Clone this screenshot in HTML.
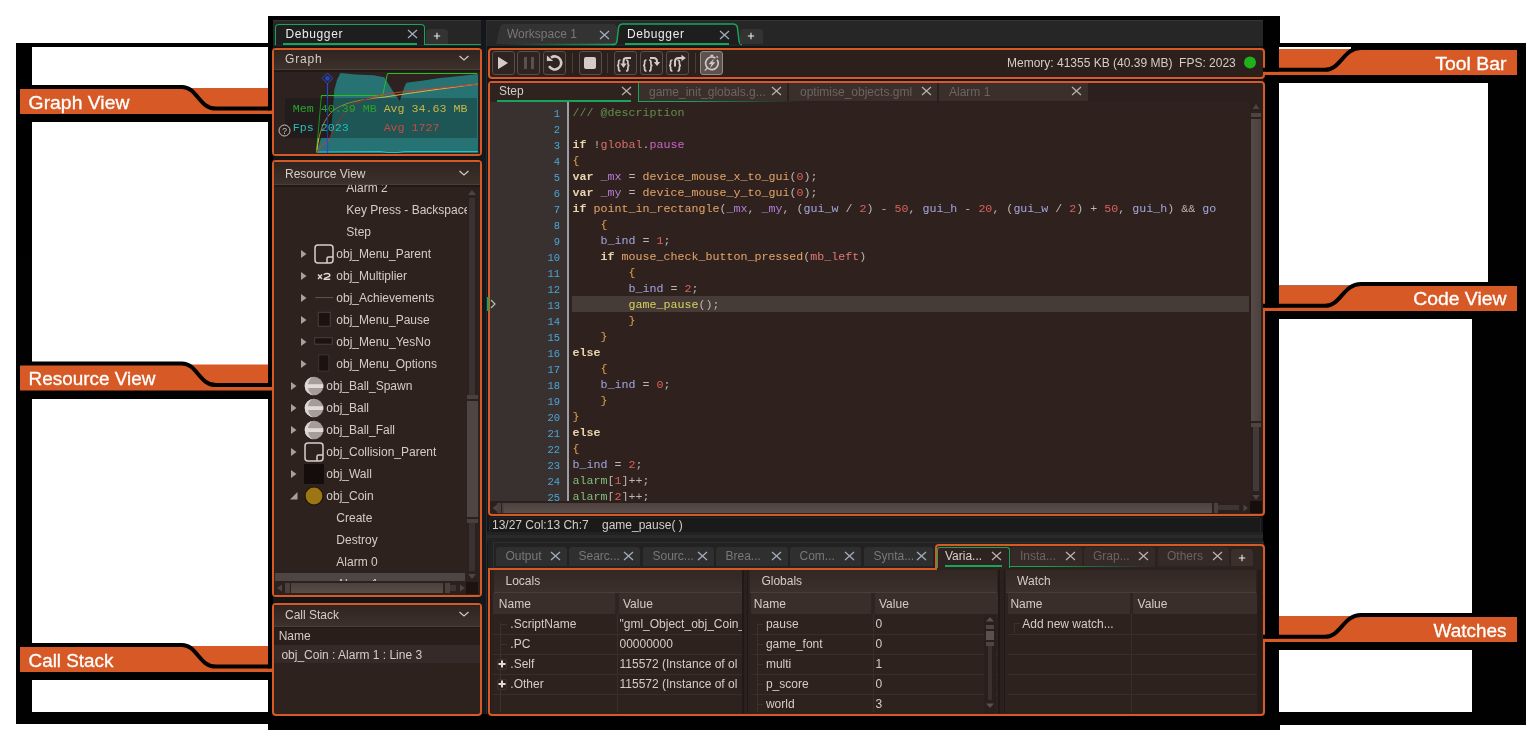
<!DOCTYPE html>
<html><head><meta charset="utf-8"><style>
*{margin:0;padding:0;box-sizing:border-box}
html,body{width:1537px;height:736px;overflow:hidden;background:#fff}
body{position:relative;font-family:"Liberation Sans",sans-serif;font-size:12px;color:#d6ccc6}
div{position:absolute}
.t{white-space:pre;line-height:14px}
.m{font-family:"Liberation Mono",monospace;font-size:11.667px;white-space:pre;line-height:16px}
svg{position:absolute;left:0;top:0}
</style></head><body>
<div id="root" style="left:0;top:0;width:1537px;height:736px;overflow:hidden;will-change:transform;opacity:0.999">
<div style="left:268px;top:16px;width:1012px;height:714px;background:#000"></div>
<div style="left:273px;top:20px;width:990px;height:694px;background:#141517"></div>
<div style="left:273px;top:20px;width:208px;height:26px;background:#262626"></div>
<div style="left:487px;top:20px;width:776px;height:26px;background:#262626"></div>
<div style="left:481px;top:20px;width:6px;height:694px;background:#15171a"></div>
<div style="left:486px;top:20px;width:1px;height:694px;background:#2a2c2f"></div>
<div style="left:273px;top:20px;width:208px;height:1px;background:#363636"></div>
<div style="left:487px;top:20px;width:776px;height:1px;background:#363636"></div>
<div style="left:275px;top:24px;width:150px;height:21px;background:#1e1e1e;border:1.5px solid #17a55a;border-bottom:none;border-radius:4px 4px 0 0"></div>
<div style="left:425px;top:43.5px;width:56px;height:1.5px;background:#17a55a"></div>
<div style="left:283px;top:42.5px;width:134px;height:2.5px;background:#17a55a"></div>
<div class="t" style="left:285.5px;top:27px;color:#ececec;letter-spacing:0.6px">Debugger</div>
<svg style="left:406.8px;top:29.200000000000003px" width="11" height="10"><path d="M1,1 L10,9 M10,1 L1,9" stroke="#a4acbc" stroke-width="1.3" fill="none"/></svg>
<div style="left:426px;top:28.5px;width:22px;height:15.5px;background:#333;border-radius:4px 4px 0 0"></div>
<svg style="left:431.5px;top:30.799999999999997px" width="10" height="10"><path d="M1.7999999999999998,5 L8.2,5 M5,1.7999999999999998 L5,8.2" stroke="#ececec" stroke-width="1.1"/></svg>
<div style="left:272px;top:48px;width:210px;height:108px;background:#2d2220;border:2px solid #d75a26;border-radius:4px"></div>
<div style="left:274px;top:50px;width:206px;height:19px;background:linear-gradient(#2f2420,#3d312c)"></div><div style="left:274px;top:69px;width:206px;height:1px;background:#4a3e39"></div><div style="left:274px;top:70px;width:206px;height:2px;background:#221815"></div><div class="t" style="left:285px;top:51.900000000000006px;color:#d6ccc6;letter-spacing:0.8px">Graph</div><svg style="left:458px;top:53.1px" width="12" height="10"><path d="M1.5,3 L6,7 L10.5,3" stroke="#cfc5bf" stroke-width="1.3" fill="none"/></svg>
<div style="left:274px;top:72px;width:206px;height:82px;background:#2d2220"></div>
<svg style="left:274px;top:71px" width="206" height="83" viewBox="274 71 206 83"><path d="M316.5,152.5 L321,138 L330.6,138 L332,120 L334.3,90 L337,80 L340.4,73.1 L356,74.5 L373.4,75.3 L384.4,77.2 L393,91.2 L399.7,101 L404.6,86.3 L406.4,82.7 L420,81 L440,78 L460,76 L478,74 L478,153 L316.5,153 Z" fill="#277272"/><path d="M316.5,152 L380,151.5 L388,152.5 L398,152.5 L405,151.5 L478,151.5" stroke="#1cc4c4" stroke-width="1.2" fill="none"/><path d="M316.5,152 L321.4,95.5 L382.6,95.5 L387.5,73.5 L477,73.5" stroke="#22c21f" stroke-width="1" fill="none"/><path d="M317,150 C319,132 324,118 334,110 C345,102 360,100 385,97 C410,93 440,89 478,84" stroke="#d8b840" stroke-width="1" fill="none"/><path d="M317,152.5 C320,147 324,143 328,142 C333,130 340,115 355,104 C370,96 390,93 410,91 C440,88 460,86 478,84" stroke="#d03c30" stroke-width="1" fill="none"/><path d="M327.5,83 L327.5,153" stroke="#2a4acf" stroke-width="1.2"/><path d="M327.5,73 L332.8,78.4 L327.5,83.7 L322.2,78.4 Z" stroke="#2a4acf" stroke-width="1" fill="none"/><circle cx="327.5" cy="78.4" r="2.3" fill="#2545c8"/></svg>
<div style="left:285px;top:98px;width:192px;height:40px;background:rgba(10,20,20,0.3)"></div>
<div class="m" style="left:292.7px;top:101px;color:#2aa42a">Mem 40.39 MB <span style="color:#c8b844">Avg 34.63 MB</span></div>
<div class="m" style="left:292.7px;top:120px;color:#27bcbc">Fps 2023     <span style="color:#c84a40">Avg 1727</span></div>
<svg style="left:277.5px;top:123.5px" width="14" height="14"><circle cx="6.5" cy="6.5" r="5.5" stroke="#cfc5bf" stroke-width="1" fill="none"/><text x="6.5" y="10" text-anchor="middle" font-size="8.5" fill="#cfc5bf" font-family="Liberation Sans">?</text></svg>
<div style="left:272px;top:160px;width:210px;height:437px;background:#2e221f;border:2px solid #d75a26;border-radius:4px"></div>
<div style="left:274px;top:162px;width:206px;height:22.30000000000001px;background:linear-gradient(#2f2420,#3d312c)"></div><div style="left:274px;top:184.3px;width:206px;height:1.0px;background:#4a3e39"></div><div style="left:274px;top:185.3px;width:206px;height:2.0px;background:#221815"></div><div class="t" style="left:285px;top:166.8px;color:#d6ccc6;letter-spacing:0px">Resource View</div><svg style="left:458px;top:168px" width="12" height="10"><path d="M1.5,3 L6,7 L10.5,3" stroke="#cfc5bf" stroke-width="1.3" fill="none"/></svg>
<div style="left:274px;top:187px;width:206px;height:408px;background:#2e221f;overflow:hidden"></div>
<div style="left:274px;top:185px;width:193px;height:396px;overflow:hidden"><div class="t" style="left:72.3px;top:-4px;color:#d6ccc6">Alarm 2</div><div class="t" style="left:72.3px;top:18px;color:#d6ccc6">Key Press - Backspace</div><div class="t" style="left:72.3px;top:40px;color:#d6ccc6">Step</div><div class="t" style="left:62.3px;top:62px;color:#d6ccc6">obj_Menu_Parent</div><svg style="left:24.5px;top:64px" width="10" height="10"><path d="M2,1 L7.5,5 L2,9 Z" fill="#a8a09c"/></svg><svg style="left:40px;top:59px" width="20" height="20"><rect x="1" y="1" width="18" height="18" rx="3" stroke="#d8cfca" stroke-width="1.5" fill="none"/><path d="M13,19 L13,14.5 Q13,13 14.5,13 L19,13" stroke="#d8cfca" stroke-width="1.5" fill="none"/></svg><div class="t" style="left:62.3px;top:84px;color:#d6ccc6">obj_Multiplier</div><svg style="left:24.5px;top:86px" width="10" height="10"><path d="M2,1 L7.5,5 L2,9 Z" fill="#a8a09c"/></svg><svg style="left:40px;top:81px" width="20" height="20"><path d="M4,8.5 L8,13 M8,8.5 L4,13" stroke="#e0d8d2" stroke-width="1.4"/><path d="M9.8,8.6 Q10.5,7.4 13,7.4 Q15.8,7.4 15.8,9.3 Q15.8,10.6 13,11.4 Q10.3,12.2 10.2,13.2 L16.2,13.2" stroke="#e0d8d2" stroke-width="1.5" fill="none"/></svg><div class="t" style="left:62.3px;top:106px;color:#d6ccc6">obj_Achievements</div><svg style="left:24.5px;top:108px" width="10" height="10"><path d="M2,1 L7.5,5 L2,9 Z" fill="#a8a09c"/></svg><svg style="left:40px;top:103px" width="20" height="20"><path d="M1.2,9.6 L19.2,9.6" stroke="#5e5450" stroke-width="1"/></svg><div class="t" style="left:62.3px;top:128px;color:#d6ccc6">obj_Menu_Pause</div><svg style="left:24.5px;top:130px" width="10" height="10"><path d="M2,1 L7.5,5 L2,9 Z" fill="#a8a09c"/></svg><svg style="left:40px;top:125px" width="20" height="20"><rect x="4.3" y="2.3" width="12" height="14" fill="#1c1311" stroke="#4a3f3b" stroke-width="1"/></svg><div class="t" style="left:62.3px;top:150px;color:#d6ccc6">obj_Menu_YesNo</div><svg style="left:24.5px;top:152px" width="10" height="10"><path d="M2,1 L7.5,5 L2,9 Z" fill="#a8a09c"/></svg><svg style="left:40px;top:147px" width="20" height="20"><rect x="0.7" y="5.7" width="17.5" height="6.5" fill="#1c1311" stroke="#4a3f3b" stroke-width="1"/></svg><div class="t" style="left:62.3px;top:172px;color:#d6ccc6">obj_Menu_Options</div><svg style="left:24.5px;top:174px" width="10" height="10"><path d="M2,1 L7.5,5 L2,9 Z" fill="#a8a09c"/></svg><svg style="left:40px;top:169px" width="20" height="20"><rect x="4.7" y="0.9" width="10.2" height="16.2" fill="#1c1311" stroke="#3e3430" stroke-width="1"/></svg><div class="t" style="left:52.3px;top:194px;color:#d6ccc6">obj_Ball_Spawn</div><svg style="left:14.5px;top:196px" width="10" height="10"><path d="M2,1 L7.5,5 L2,9 Z" fill="#a8a09c"/></svg><svg style="left:30px;top:191px" width="20" height="20"><circle cx="10" cy="10" r="9.3" fill="#a59d9a"/><path d="M10,0.7 A9.3,9.3 0 0 0 10,19.3 A6,9.3 0 0 1 10,0.7 Z" fill="#dcd4d0"/><rect x="1" y="8.2" width="18.3" height="3.8" fill="#e2dad6"/></svg><div class="t" style="left:52.3px;top:216px;color:#d6ccc6">obj_Ball</div><svg style="left:14.5px;top:218px" width="10" height="10"><path d="M2,1 L7.5,5 L2,9 Z" fill="#a8a09c"/></svg><svg style="left:30px;top:213px" width="20" height="20"><circle cx="10" cy="10" r="9.3" fill="#a59d9a"/><path d="M10,0.7 A9.3,9.3 0 0 0 10,19.3 A6,9.3 0 0 1 10,0.7 Z" fill="#dcd4d0"/><rect x="1" y="8.2" width="18.3" height="3.8" fill="#e2dad6"/></svg><div class="t" style="left:52.3px;top:238px;color:#d6ccc6">obj_Ball_Fall</div><svg style="left:14.5px;top:240px" width="10" height="10"><path d="M2,1 L7.5,5 L2,9 Z" fill="#a8a09c"/></svg><svg style="left:30px;top:235px" width="20" height="20"><circle cx="10" cy="10" r="9.3" fill="#a59d9a"/><path d="M10,0.7 A9.3,9.3 0 0 0 10,19.3 A6,9.3 0 0 1 10,0.7 Z" fill="#dcd4d0"/><rect x="1" y="8.2" width="18.3" height="3.8" fill="#e2dad6"/></svg><div class="t" style="left:52.3px;top:260px;color:#d6ccc6">obj_Collision_Parent</div><svg style="left:14.5px;top:262px" width="10" height="10"><path d="M2,1 L7.5,5 L2,9 Z" fill="#a8a09c"/></svg><svg style="left:30px;top:257px" width="20" height="20"><rect x="1" y="1" width="18" height="18" rx="3" stroke="#d8cfca" stroke-width="1.5" fill="none"/><path d="M13,19 L13,14.5 Q13,13 14.5,13 L19,13" stroke="#d8cfca" stroke-width="1.5" fill="none"/></svg><div class="t" style="left:52.3px;top:282px;color:#d6ccc6">obj_Wall</div><svg style="left:14.5px;top:284px" width="10" height="10"><path d="M2,1 L7.5,5 L2,9 Z" fill="#a8a09c"/></svg><svg style="left:30px;top:279px" width="20" height="20"><rect x="0" y="0" width="20" height="20" fill="#150d0b"/></svg><div class="t" style="left:52.3px;top:304px;color:#d6ccc6">obj_Coin</div><svg style="left:14.5px;top:306px" width="10" height="10"><path d="M1,8.5 L8.5,8.5 L8.5,1 Z" fill="#a8a09c"/></svg><svg style="left:30px;top:301px" width="20" height="20"><circle cx="10" cy="10" r="9" fill="#9c7612" stroke="#241605" stroke-width="1.2"/></svg><div class="t" style="left:62.3px;top:326px;color:#d6ccc6">Create</div><div class="t" style="left:62.3px;top:348px;color:#d6ccc6">Destroy</div><div class="t" style="left:62.3px;top:370px;color:#d6ccc6">Alarm 0</div><div class="t" style="left:62.3px;top:392px;color:#d6ccc6">Alarm 1</div></div>
<div style="left:466.5px;top:187px;width:11.0px;height:395px;background:#2c211e"></div>
<svg style="left:467px;top:187px" width="10" height="10"><path d="M1,8 L5,3 L9,8 Z" fill="#4e4440"/></svg>
<div style="left:469px;top:198px;width:6px;height:197px;background:#3a3230"></div>
<div style="left:466.5px;top:395px;width:11.0px;height:4px;background:#4a403d"></div>
<div style="left:466.5px;top:400.7px;width:11.0px;height:115.90000000000003px;background:#4f4644"></div>
<div style="left:466.5px;top:518.5px;width:11.0px;height:4.5px;background:#4a403d"></div>
<div style="left:469px;top:523px;width:6px;height:48px;background:#3a3230"></div>
<svg style="left:467px;top:572px" width="10" height="10"><path d="M1,2 L5,7 L9,2 Z" fill="#4e4440"/></svg>
<div style="left:275px;top:573px;width:190.39999999999998px;height:8px;background:#4d4645"></div>
<div style="left:275px;top:573px;width:190px;height:8px;overflow:hidden"><div class="t" style="left:62px;top:4px;color:#d6ccc6">Alarm 1</div></div>
<div style="left:274px;top:582px;width:192px;height:12px;background:#2c211e"></div>
<svg style="left:275px;top:583px" width="9" height="10"><path d="M7,1.5 L2,5 L7,8.5 Z" fill="#4e4440"/></svg>
<div style="left:285px;top:583px;width:4.5px;height:10px;background:#4a403d"></div>
<div style="left:291px;top:583px;width:152px;height:10px;background:linear-gradient(#4a3f3b,#5a4e4a)"></div>
<div style="left:445px;top:583px;width:4.5px;height:10px;background:#4a403d"></div>
<div style="left:450px;top:585px;width:6px;height:6px;background:#3e3431"></div>
<svg style="left:458px;top:583px" width="9" height="10"><path d="M2,1.5 L7,5 L2,8.5 Z" fill="#4e4440"/></svg>
<div style="left:466px;top:582px;width:12px;height:12px;background:#1e1210"></div>
<div style="left:272px;top:603px;width:210px;height:113px;background:#2e221f;border:2px solid #d75a26;border-radius:4px"></div>
<div style="left:274px;top:605px;width:206px;height:20.600000000000023px;background:linear-gradient(#2f2420,#3d312c)"></div><div style="left:274px;top:625.6px;width:206px;height:1.0px;background:#4a3e39"></div><div style="left:274px;top:626.6px;width:206px;height:2.0px;background:#221815"></div><div class="t" style="left:285px;top:607.6999999999999px;color:#d6ccc6;letter-spacing:0px">Call Stack</div><svg style="left:458px;top:608.9px" width="12" height="10"><path d="M1.5,3 L6,7 L10.5,3" stroke="#cfc5bf" stroke-width="1.3" fill="none"/></svg>
<div style="left:274px;top:628px;width:206px;height:16.600000000000023px;background:#2a1e1b"></div>
<div class="t" style="left:278.7px;top:628.6px;color:#d6ccc6">Name</div>
<div style="left:274px;top:644.6px;width:206px;height:18.799999999999955px;background:#352a27"></div>
<div class="t" style="left:281.4px;top:647.6px;color:#d6ccc6">obj_Coin : Alarm 1 : Line 3</div>
<svg style="left:490px;top:22px" width="280" height="24" viewBox="490 22 280 24"><path d="M496,44 L500,27 Q501,24 504,24 L612,24 Q616,24 617,27 L618,44 Z" fill="#333333"/><defs><linearGradient id="gfade" x1="0" x2="1" y1="0" y2="0"><stop offset="0" stop-color="#17a55a" stop-opacity="0"/><stop offset="1" stop-color="#17a55a"/></linearGradient></defs><rect x="500" y="43.75" width="114" height="1.5" fill="url(#gfade)"/><path d="M612,44.5 L614,44.5 Q616.5,44.5 617,41 L618.5,28 Q619,24 623,24 L733,24 Q737,24 737.5,28 L739,41 Q739.5,44.5 742,44.5" stroke="#17a55a" stroke-width="1.5" fill="#1e1e1e"/><path d="M740,44 L740,32 Q740,29 743,29 L760,29 Q763,29 763,32 L763,44 Z" fill="#333"/></svg>
<div style="left:625px;top:42.5px;width:104px;height:2.5px;background:#17a55a"></div>
<div class="t" style="left:507px;top:27px;color:#787878">Workspace 1</div>
<svg style="left:598.9px;top:29.5px" width="11" height="10"><path d="M1,1 L10,9 M10,1 L1,9" stroke="#a4acbc" stroke-width="1.3" fill="none"/></svg>
<div class="t" style="left:627px;top:27px;color:#ececec;letter-spacing:0.6px">Debugger</div>
<svg style="left:719.0px;top:29.5px" width="11" height="10"><path d="M1,1 L10,9 M10,1 L1,9" stroke="#a4acbc" stroke-width="1.3" fill="none"/></svg>
<svg style="left:745.5px;top:30.799999999999997px" width="10" height="10"><path d="M1.7999999999999998,5 L8.2,5 M5,1.7999999999999998 L5,8.2" stroke="#ececec" stroke-width="1.1"/></svg>
<div style="left:488px;top:47.8px;width:777px;height:31.200000000000003px;background:#2c201d;border:2px solid #d75a26;border-radius:4px"></div>
<div style="left:491.5px;top:51px;width:23.0px;height:24px;background:#2e2421;border:1px solid #5a4e4a;border-radius:3px"></div>
<div style="left:517px;top:51px;width:23px;height:24px;background:#2e2421;border:1px solid #5a4e4a;border-radius:3px"></div>
<div style="left:543px;top:51px;width:23px;height:24px;background:#2e2421;border:1px solid #5a4e4a;border-radius:3px"></div>
<div style="left:578.5px;top:51px;width:23.0px;height:24px;background:#2e2421;border:1px solid #5a4e4a;border-radius:3px"></div>
<div style="left:613.5px;top:51px;width:23.0px;height:24px;background:#2e2421;border:1px solid #5a4e4a;border-radius:3px"></div>
<div style="left:639.5px;top:51px;width:23.0px;height:24px;background:#2e2421;border:1px solid #5a4e4a;border-radius:3px"></div>
<div style="left:665.5px;top:51px;width:23.0px;height:24px;background:#2e2421;border:1px solid #5a4e4a;border-radius:3px"></div>
<div style="left:700px;top:51px;width:23px;height:24px;background:#5c5350;border:1px solid #958a86;border-radius:3px"></div>
<div style="left:572px;top:53px;width:1px;height:20px;background:#4a3e3a"></div>
<div style="left:607px;top:53px;width:1px;height:20px;background:#4a3e3a"></div>
<div style="left:694.5px;top:53px;width:1.0px;height:20px;background:#4a3e3a"></div>
<svg style="left:488px;top:48px" width="240" height="30" viewBox="488 48 240 30"><path d="M498,56.8 L508,63 L498,69.2 Z" fill="#d6cac6"/><rect x="524" y="57" width="3" height="12" fill="#5d504c"/><rect x="531" y="57" width="3" height="12" fill="#5d504c"/><path d="M551,57.6 A6.5,6.5 0 1 1 549.1,66.15" stroke="#d6cac6" stroke-width="2.6" fill="none"/><path d="M546.9,55.5 L546.9,61 L553.2,61 Z" fill="#d6cac6"/><rect x="584" y="57" width="12" height="12" rx="2" fill="#d6cac6"/><path d="M620.5,60 Q618.6,60 618.6,62 L618.6,64 Q618.6,65.5 617,65.5 Q618.6,65.5 618.6,67 L618.6,69 Q618.6,71 620.5,71" stroke="#d6cac6" stroke-width="1.7" fill="none"/><path d="M626,60 Q627.9,60 627.9,62 L627.9,64 Q627.9,65.5 629.5,65.5 Q627.9,65.5 627.9,67 L627.9,69 Q627.9,71 626,71" stroke="#d6cac6" stroke-width="1.7" fill="none"/><path d="M631,58 L626.5,58 Q623.5,58 623.5,61 L623.5,64" stroke="#d6cac6" stroke-width="2" fill="none"/><path d="M620.2,63.5 L626.8,63.5 L623.5,67.8 Z" fill="#d6cac6"/><path d="M646.5,60 Q644.6,60 644.6,62 L644.6,64 Q644.6,65.5 643,65.5 Q644.6,65.5 644.6,67 L644.6,69 Q644.6,71 646.5,71" stroke="#d6cac6" stroke-width="1.7" fill="none"/><path d="M649,60 Q650.9,60 650.9,62 L650.9,64 Q650.9,65.5 652.5,65.5 Q650.9,65.5 650.9,67 L650.9,69 Q650.9,71 649,71" stroke="#d6cac6" stroke-width="1.7" fill="none"/><path d="M650,58 L653.5,58 Q657,58 657,61.5 L657,62.5" stroke="#d6cac6" stroke-width="2" fill="none"/><path d="M653.8,62 L660.2,62 L657,66 Z" fill="#d6cac6"/><path d="M672.5,60 Q670.6,60 670.6,62 L670.6,64 Q670.6,65.5 669,65.5 Q670.6,65.5 670.6,67 L670.6,69 Q670.6,71 672.5,71" stroke="#d6cac6" stroke-width="1.7" fill="none"/><path d="M677.5,60 Q679.4,60 679.4,62 L679.4,64 Q679.4,65.5 681.0,65.5 Q679.4,65.5 679.4,67 L679.4,69 Q679.4,71 677.5,71" stroke="#d6cac6" stroke-width="1.7" fill="none"/><path d="M675,66.5 L675,61.5 Q675,58 678.5,58 L682,58" stroke="#d6cac6" stroke-width="2" fill="none"/><path d="M681.5,54.8 L685.8,58 L681.5,61.2 Z" fill="#d6cac6"/><path d="M715.5,58.1 A6.3,6.3 0 0 0 708.3,68.5 M717.1,59.7 A6.3,6.3 0 0 1 706.7,66.9" stroke="#d6cac6" stroke-width="1.6" fill="none"/><path d="M711.9,55.5 L711.9,57.2 M710.5,55.3 L713.3,55.3 M716.6,56.3 L717.9,57.6" stroke="#d6cac6" stroke-width="1.3"/><path d="M714.2,58.2 L708.6,64.3 L711.6,64.3 L709.6,68.6 L715.4,62.3 L712.4,62.3 Z" fill="#d6cac6"/><path d="M704.8,70.6 L707.6,67.6" stroke="#d6cac6" stroke-width="1.2"/></svg>
<div class="t" style="left:1007px;top:56px;color:#d6ccc6">Memory: 41355 KB (40.39 MB)  FPS: 2023</div>
<svg style="left:1243px;top:56px" width="14" height="14"><circle cx="7" cy="6.6" r="6" fill="#1fb01c"/></svg>
<div style="left:488px;top:81px;width:777px;height:434.5px;background:#2f211e;border:2px solid #d75a26;border-radius:4px"></div>
<div style="left:490px;top:83px;width:772px;height:19px;background:#2b201d"></div>
<div style="left:490px;top:83px;width:148px;height:19px;background:#2f2320"></div>
<div class="t" style="left:499px;top:84.3px;color:#d6ccc6">Step</div>
<svg style="left:621.1px;top:86.3px" width="11" height="10"><path d="M1,1 L10,9 M10,1 L1,9" stroke="#b8b0ac" stroke-width="1.3" fill="none"/></svg>
<div style="left:497px;top:100px;width:134px;height:2px;background:#17a55a"></div>
<div style="left:638px;top:83px;width:149px;height:17.799999999999997px;background:#3a2f2b"></div>
<div style="left:638px;top:83px;width:1.2000000000000455px;height:19px;background:#17a55a"></div>
<div style="left:638px;top:100.8px;width:162px;height:1.2000000000000028px;background:linear-gradient(90deg,#17a55a 30%,rgba(23,165,90,0))"></div>
<div class="t" style="left:649px;top:85px;color:#6e6360">game_init_globals.g...</div>
<svg style="left:771.3px;top:86.1px" width="11" height="10"><path d="M1,1 L10,9 M10,1 L1,9" stroke="#b8b0ac" stroke-width="1.3" fill="none"/></svg>
<div style="left:789px;top:83px;width:148px;height:17.5px;background:#3a2f2b"></div>
<div class="t" style="left:800px;top:85px;color:#6e6360">optimise_objects.gml</div>
<svg style="left:921.1px;top:86.1px" width="11" height="10"><path d="M1,1 L10,9 M10,1 L1,9" stroke="#b8b0ac" stroke-width="1.3" fill="none"/></svg>
<div style="left:939px;top:83px;width:149px;height:17.5px;background:#3a2f2b"></div>
<div class="t" style="left:949px;top:85px;color:#6e6360">Alarm 1</div>
<svg style="left:1071.3px;top:86.1px" width="11" height="10"><path d="M1,1 L10,9 M10,1 L1,9" stroke="#b8b0ac" stroke-width="1.3" fill="none"/></svg>
<div style="left:490px;top:102px;width:77px;height:399px;background:#383130"></div>
<div style="left:567px;top:102px;width:2px;height:399px;background:#9aa0a6"></div>
<div style="left:572px;top:296px;width:677px;height:16px;background:#463b37"></div>
<div style="left:490px;top:105.5px;width:70px;height:397px;overflow:hidden"><div class="m" style="left:0;top:0px;width:70px;text-align:right;color:#4aa6d8;font-size:10.5px">1</div><div class="m" style="left:0;top:16px;width:70px;text-align:right;color:#4aa6d8;font-size:10.5px">2</div><div class="m" style="left:0;top:32px;width:70px;text-align:right;color:#4aa6d8;font-size:10.5px">3</div><div class="m" style="left:0;top:48px;width:70px;text-align:right;color:#4aa6d8;font-size:10.5px">4</div><div class="m" style="left:0;top:64px;width:70px;text-align:right;color:#4aa6d8;font-size:10.5px">5</div><div class="m" style="left:0;top:80px;width:70px;text-align:right;color:#4aa6d8;font-size:10.5px">6</div><div class="m" style="left:0;top:96px;width:70px;text-align:right;color:#4aa6d8;font-size:10.5px">7</div><div class="m" style="left:0;top:112px;width:70px;text-align:right;color:#4aa6d8;font-size:10.5px">8</div><div class="m" style="left:0;top:128px;width:70px;text-align:right;color:#4aa6d8;font-size:10.5px">9</div><div class="m" style="left:0;top:144px;width:70px;text-align:right;color:#4aa6d8;font-size:10.5px">10</div><div class="m" style="left:0;top:160px;width:70px;text-align:right;color:#4aa6d8;font-size:10.5px">11</div><div class="m" style="left:0;top:176px;width:70px;text-align:right;color:#4aa6d8;font-size:10.5px">12</div><div class="m" style="left:0;top:192px;width:70px;text-align:right;color:#4aa6d8;font-size:10.5px">13</div><div class="m" style="left:0;top:208px;width:70px;text-align:right;color:#4aa6d8;font-size:10.5px">14</div><div class="m" style="left:0;top:224px;width:70px;text-align:right;color:#4aa6d8;font-size:10.5px">15</div><div class="m" style="left:0;top:240px;width:70px;text-align:right;color:#4aa6d8;font-size:10.5px">16</div><div class="m" style="left:0;top:256px;width:70px;text-align:right;color:#4aa6d8;font-size:10.5px">17</div><div class="m" style="left:0;top:272px;width:70px;text-align:right;color:#4aa6d8;font-size:10.5px">18</div><div class="m" style="left:0;top:288px;width:70px;text-align:right;color:#4aa6d8;font-size:10.5px">19</div><div class="m" style="left:0;top:304px;width:70px;text-align:right;color:#4aa6d8;font-size:10.5px">20</div><div class="m" style="left:0;top:320px;width:70px;text-align:right;color:#4aa6d8;font-size:10.5px">21</div><div class="m" style="left:0;top:336px;width:70px;text-align:right;color:#4aa6d8;font-size:10.5px">22</div><div class="m" style="left:0;top:352px;width:70px;text-align:right;color:#4aa6d8;font-size:10.5px">23</div><div class="m" style="left:0;top:368px;width:70px;text-align:right;color:#4aa6d8;font-size:10.5px">24</div><div class="m" style="left:0;top:384px;width:70px;text-align:right;color:#4aa6d8;font-size:10.5px">25</div></div>
<svg style="left:489px;top:298px" width="10" height="12"><path d="M2,2 L6,6 L2,10" stroke="#c0b8b4" stroke-width="1.2" fill="none"/></svg>
<div style="left:487px;top:297px;width:1.5px;height:14px;background:#17a55a"></div>
<div style="left:572.5px;top:105.4px;width:680px;height:396.6px;overflow:hidden"><div class="m" style="left:0;top:0px"><span style="color:#5f8f4a">/// @description</span></div><div class="m" style="left:0;top:16px"></div><div class="m" style="left:0;top:32px"><span style="color:#e8d6b0;font-weight:bold">if</span><span style="color:#bdb5b0"> !</span><span style="color:#d9706a">global</span><span style="color:#bdb5b0">.</span><span style="color:#c964c8">pause</span></div><div class="m" style="left:0;top:48px"><span style="color:#e0a050">{</span></div><div class="m" style="left:0;top:64px"><span style="color:#e8d6b0;font-weight:bold">var</span><span style="color:#bdb5b0"> </span><span style="color:#b27fd6">_mx</span><span style="color:#bdb5b0"> = </span><span style="color:#e3a56a">device_mouse_x_to_gui</span><span style="color:#bdb5b0">(</span><span style="color:#d9625c">0</span><span style="color:#bdb5b0">);</span></div><div class="m" style="left:0;top:80px"><span style="color:#e8d6b0;font-weight:bold">var</span><span style="color:#bdb5b0"> </span><span style="color:#b27fd6">_my</span><span style="color:#bdb5b0"> = </span><span style="color:#e3a56a">device_mouse_y_to_gui</span><span style="color:#bdb5b0">(</span><span style="color:#d9625c">0</span><span style="color:#bdb5b0">);</span></div><div class="m" style="left:0;top:96px"><span style="color:#e8d6b0;font-weight:bold">if</span><span style="color:#bdb5b0"> </span><span style="color:#e3a56a">point_in_rectangle</span><span style="color:#bdb5b0">(</span><span style="color:#b27fd6">_mx</span><span style="color:#bdb5b0">, </span><span style="color:#b27fd6">_my</span><span style="color:#bdb5b0">, (</span><span style="color:#a3a6dd">gui_w</span><span style="color:#bdb5b0"> / </span><span style="color:#d9625c">2</span><span style="color:#bdb5b0">) - </span><span style="color:#d9625c">50</span><span style="color:#bdb5b0">, </span><span style="color:#a3a6dd">gui_h</span><span style="color:#bdb5b0"> - </span><span style="color:#d9625c">20</span><span style="color:#bdb5b0">, (</span><span style="color:#a3a6dd">gui_w</span><span style="color:#bdb5b0"> / </span><span style="color:#d9625c">2</span><span style="color:#bdb5b0">) + </span><span style="color:#d9625c">50</span><span style="color:#bdb5b0">, </span><span style="color:#a3a6dd">gui_h</span><span style="color:#bdb5b0">) &amp;&amp; </span><span style="color:#a3a6dd">go</span></div><div class="m" style="left:0;top:112px"><span style="color:#bdb5b0">    </span><span style="color:#e0a050">{</span></div><div class="m" style="left:0;top:128px"><span style="color:#bdb5b0">    </span><span style="color:#a3a6dd">b_ind</span><span style="color:#bdb5b0"> = </span><span style="color:#d9625c">1</span><span style="color:#bdb5b0">;</span></div><div class="m" style="left:0;top:144px"><span style="color:#bdb5b0">    </span><span style="color:#e8d6b0;font-weight:bold">if</span><span style="color:#bdb5b0"> </span><span style="color:#e3a56a">mouse_check_button_pressed</span><span style="color:#bdb5b0">(</span><span style="color:#e07a7a">mb_left</span><span style="color:#bdb5b0">)</span></div><div class="m" style="left:0;top:160px"><span style="color:#bdb5b0">        </span><span style="color:#e0a050">{</span></div><div class="m" style="left:0;top:176px"><span style="color:#bdb5b0">        </span><span style="color:#a3a6dd">b_ind</span><span style="color:#bdb5b0"> = </span><span style="color:#d9625c">2</span><span style="color:#bdb5b0">;</span></div><div class="m" style="left:0;top:192px"><span style="color:#bdb5b0">        </span><span style="color:#d8d060">game_pause</span><span style="color:#bdb5b0">();</span></div><div class="m" style="left:0;top:208px"><span style="color:#bdb5b0">        </span><span style="color:#e0a050">}</span></div><div class="m" style="left:0;top:224px"><span style="color:#bdb5b0">    </span><span style="color:#e0a050">}</span></div><div class="m" style="left:0;top:240px"><span style="color:#e8d6b0;font-weight:bold">else</span></div><div class="m" style="left:0;top:256px"><span style="color:#bdb5b0">    </span><span style="color:#e0a050">{</span></div><div class="m" style="left:0;top:272px"><span style="color:#bdb5b0">    </span><span style="color:#a3a6dd">b_ind</span><span style="color:#bdb5b0"> = </span><span style="color:#d9625c">0</span><span style="color:#bdb5b0">;</span></div><div class="m" style="left:0;top:288px"><span style="color:#bdb5b0">    </span><span style="color:#e0a050">}</span></div><div class="m" style="left:0;top:304px"><span style="color:#e0a050">}</span></div><div class="m" style="left:0;top:320px"><span style="color:#e8d6b0;font-weight:bold">else</span></div><div class="m" style="left:0;top:336px"><span style="color:#e0a050">{</span></div><div class="m" style="left:0;top:352px"><span style="color:#a3a6dd">b_ind</span><span style="color:#bdb5b0"> = </span><span style="color:#d9625c">2</span><span style="color:#bdb5b0">;</span></div><div class="m" style="left:0;top:368px"><span style="color:#7fc07a">alarm</span><span style="color:#bdb5b0">[</span><span style="color:#d9625c">1</span><span style="color:#bdb5b0">]++;</span></div><div class="m" style="left:0;top:384px"><span style="color:#7fc07a">alarm</span><span style="color:#bdb5b0">[</span><span style="color:#d9625c">2</span><span style="color:#bdb5b0">]++;</span></div></div>
<div style="left:1250px;top:102px;width:12px;height:399px;background:#2b201d"></div>
<svg style="left:1250px;top:103px" width="12" height="8"><path d="M2.5,6 L6,1 L9.5,6 Z" fill="#4e4440"/></svg>
<div style="left:1250.7px;top:113px;width:10.5px;height:4px;background:#4e4441"></div>
<div style="left:1250.7px;top:119px;width:10.5px;height:302px;background:linear-gradient(90deg,#564b48,#4a403d)"></div>
<div style="left:1250.7px;top:423px;width:10.5px;height:4px;background:#4e4441"></div>
<div style="left:1252.8px;top:427px;width:6.2000000000000455px;height:64px;background:#423a38"></div>
<svg style="left:1250px;top:493px" width="12" height="8"><path d="M2.5,2 L6,7 L9.5,2 Z" fill="#4e4440"/></svg>
<div style="left:490px;top:501px;width:760px;height:12px;background:#2b201d"></div>
<svg style="left:491px;top:503px" width="8" height="10"><path d="M6,1.5 L1.5,5 L6,8.5 Z" fill="#4e4440"/></svg>
<div style="left:497px;top:502.6px;width:3.5px;height:10.399999999999977px;background:#4a403d"></div>
<div style="left:502px;top:502.6px;width:1.5px;height:10.399999999999977px;background:#4a403d"></div>
<div style="left:504px;top:502.6px;width:708px;height:10.399999999999977px;background:linear-gradient(#4c413d,#5c504c)"></div>
<div style="left:1213.5px;top:502.6px;width:4.5px;height:10.399999999999977px;background:#4a403d"></div>
<div style="left:1218px;top:505.2px;width:21px;height:4.800000000000011px;background:#3e3431"></div>
<svg style="left:1242px;top:503px" width="8" height="10"><path d="M1.5,1.5 L6,5 L1.5,8.5 Z" fill="#4e4440"/></svg>
<div style="left:1250px;top:501px;width:12px;height:12px;background:#160e0c"></div>
<div style="left:489px;top:517px;width:772px;height:16px;background:#1a1a1a;border:1px solid #262626;border-radius:2px"></div>
<div class="t" style="left:492px;top:518px;color:#d6ccc6">13/27 Col:13 Ch:7</div>
<div class="t" style="left:602px;top:518px;color:#d6ccc6">game_pause( )</div>
<div style="left:487px;top:532px;width:776px;height:10px;background:#222222"></div>
<div style="left:487px;top:534.7px;width:776px;height:3.199999999999932px;background:#2a2a2a"></div>
<div style="left:488px;top:541px;width:776px;height:27px;background:#222222"></div>
<div style="left:493px;top:541.5px;width:770px;height:1.1000000000000227px;background:#2f2f2f"></div>
<div style="left:493px;top:541.5px;width:1.1000000000000227px;height:26.5px;background:#2f2f2f"></div>
<div style="left:496px;top:547px;width:71px;height:19px;background:#2f2f2f;border-radius:3px 3px 0 0"></div>
<div class="t" style="left:505.5px;top:549px;color:#787878">Output</div>
<svg style="left:550.2px;top:551.2px" width="11" height="10"><path d="M1,1 L10,9 M10,1 L1,9" stroke="#a4acbc" stroke-width="1.3" fill="none"/></svg>
<div style="left:569px;top:547px;width:71px;height:19px;background:#2f2f2f;border-radius:3px 3px 0 0"></div>
<div class="t" style="left:578.5px;top:549px;color:#787878">Searc...</div>
<svg style="left:623.2px;top:551.2px" width="11" height="10"><path d="M1,1 L10,9 M10,1 L1,9" stroke="#a4acbc" stroke-width="1.3" fill="none"/></svg>
<div style="left:643px;top:547px;width:71px;height:19px;background:#2f2f2f;border-radius:3px 3px 0 0"></div>
<div class="t" style="left:652.5px;top:549px;color:#787878">Sourc...</div>
<svg style="left:697.2px;top:551.2px" width="11" height="10"><path d="M1,1 L10,9 M10,1 L1,9" stroke="#a4acbc" stroke-width="1.3" fill="none"/></svg>
<div style="left:716px;top:547px;width:72px;height:19px;background:#2f2f2f;border-radius:3px 3px 0 0"></div>
<div class="t" style="left:725.5px;top:549px;color:#787878">Brea...</div>
<svg style="left:771.2px;top:551.2px" width="11" height="10"><path d="M1,1 L10,9 M10,1 L1,9" stroke="#a4acbc" stroke-width="1.3" fill="none"/></svg>
<div style="left:790px;top:547px;width:71px;height:19px;background:#2f2f2f;border-radius:3px 3px 0 0"></div>
<div class="t" style="left:799.5px;top:549px;color:#787878">Com...</div>
<svg style="left:844.2px;top:551.2px" width="11" height="10"><path d="M1,1 L10,9 M10,1 L1,9" stroke="#a4acbc" stroke-width="1.3" fill="none"/></svg>
<div style="left:864px;top:547px;width:69px;height:19px;background:#2f2f2f;border-radius:3px 3px 0 0"></div>
<div class="t" style="left:873.5px;top:549px;color:#787878">Synta...</div>
<svg style="left:916.2px;top:551.2px" width="11" height="10"><path d="M1,1 L10,9 M10,1 L1,9" stroke="#a4acbc" stroke-width="1.3" fill="none"/></svg>
<div style="left:488px;top:568px;width:777px;height:147.5px;background:#2e221f;border:2px solid #d75a26;border-radius:0 0 4px 4px"></div>
<div style="left:935px;top:544px;width:330px;height:26px;background:#2e221f;border:2px solid #d75a26;border-bottom:none;border-radius:4px 4px 0 0"></div>
<div style="left:937px;top:546.5px;width:73px;height:21.5px;background:#2e2320;border:1px solid #17a55a;border-bottom:none;border-radius:3px 3px 0 0"></div>
<div class="t" style="left:945px;top:549px;color:#d8d0ca">Varia...</div>
<svg style="left:991.3px;top:551.2px" width="11" height="10"><path d="M1,1 L10,9 M10,1 L1,9" stroke="#b8b0ac" stroke-width="1.3" fill="none"/></svg>
<div style="left:945px;top:564.5px;width:57px;height:2.5px;background:#17a55a"></div>
<div style="left:1010px;top:566px;width:150px;height:1.2000000000000455px;background:linear-gradient(90deg,#17a55a 20%,rgba(23,165,90,0))"></div>
<div style="left:1011px;top:547px;width:71px;height:19px;background:#342a27;border-radius:3px 3px 0 0"></div>
<div class="t" style="left:1020px;top:549px;color:#6e6360">Insta...</div>
<svg style="left:1065.0px;top:551.2px" width="11" height="10"><path d="M1,1 L10,9 M10,1 L1,9" stroke="#b8b0ac" stroke-width="1.3" fill="none"/></svg>
<div style="left:1084px;top:547px;width:71px;height:19px;background:#342a27;border-radius:3px 3px 0 0"></div>
<div class="t" style="left:1093px;top:549px;color:#6e6360">Grap...</div>
<svg style="left:1138.0px;top:551.2px" width="11" height="10"><path d="M1,1 L10,9 M10,1 L1,9" stroke="#b8b0ac" stroke-width="1.3" fill="none"/></svg>
<div style="left:1158px;top:547px;width:71px;height:19px;background:#342a27;border-radius:3px 3px 0 0"></div>
<div class="t" style="left:1167px;top:549px;color:#6e6360">Others</div>
<svg style="left:1212.0px;top:551.2px" width="11" height="10"><path d="M1,1 L10,9 M10,1 L1,9" stroke="#b8b0ac" stroke-width="1.3" fill="none"/></svg>
<div style="left:1231px;top:549px;width:22px;height:17px;background:#3a2f2b;border-radius:4px 4px 0 0"></div>
<svg style="left:1236.5px;top:552.5px" width="10" height="10"><path d="M1.7999999999999998,5 L8.2,5 M5,1.7999999999999998 L5,8.2" stroke="#ececec" stroke-width="1.1"/></svg>
<div style="left:488px;top:566px;width:447px;height:4px;background:transparent"></div>
<div style="left:490px;top:570.3px;width:772px;height:143.20000000000005px;background:#261b18"></div>
<div style="left:490.6px;top:570.3px;width:251.39999999999998px;height:143.20000000000005px;background:#2e221f"></div><div style="left:494.1px;top:570.3px;width:247.89999999999998px;height:22.40000000000009px;background:linear-gradient(#332723,#3c302b);border-bottom:1px solid #4a3d38"></div><div class="t" style="left:505.5px;top:573.8px;color:#d6ccc6">Locals</div><div style="left:493.1px;top:593.1px;width:248.89999999999998px;height:20.5px;background:#3a2e2a"></div><div style="left:615px;top:593.1px;width:3.7999999999999545px;height:20.5px;background:#2f2421"></div><div class="t" style="left:498.8px;top:596.7px;color:#d6ccc6">Name</div><div class="t" style="left:623px;top:596.7px;color:#d6ccc6">Value</div><div style="left:493.1px;top:633.6px;width:248.89999999999998px;height:1.0px;background:#3a2d2a"></div><div style="left:493.1px;top:653.6px;width:248.89999999999998px;height:1.0px;background:#3a2d2a"></div><div style="left:493.1px;top:673.6px;width:248.89999999999998px;height:1.0px;background:#3a2d2a"></div><div style="left:493.1px;top:693.6px;width:248.89999999999998px;height:1.0px;background:#3a2d2a"></div><div style="left:616.5px;top:613.6px;width:1.0px;height:99.89999999999998px;background:#3a2d2a"></div>
<div style="left:748px;top:570.3px;width:250px;height:143.20000000000005px;background:#2e221f"></div><div style="left:749.7px;top:570.3px;width:247.19999999999993px;height:22.40000000000009px;background:linear-gradient(#332723,#3c302b);border-bottom:1px solid #4a3d38"></div><div class="t" style="left:761.4px;top:573.8px;color:#d6ccc6">Globals</div><div style="left:750.5px;top:593.1px;width:247.5px;height:20.5px;background:#3a2e2a"></div><div style="left:871px;top:593.1px;width:3.7999999999999545px;height:20.5px;background:#2f2421"></div><div class="t" style="left:753.8px;top:596.7px;color:#d6ccc6">Name</div><div class="t" style="left:879px;top:596.7px;color:#d6ccc6">Value</div><div style="left:750.5px;top:633.6px;width:247.5px;height:1.0px;background:#3a2d2a"></div><div style="left:750.5px;top:653.6px;width:247.5px;height:1.0px;background:#3a2d2a"></div><div style="left:750.5px;top:673.6px;width:247.5px;height:1.0px;background:#3a2d2a"></div><div style="left:750.5px;top:693.6px;width:247.5px;height:1.0px;background:#3a2d2a"></div><div style="left:872.5px;top:613.6px;width:1.0px;height:99.89999999999998px;background:#3a2d2a"></div>
<div style="left:1005.2px;top:570.3px;width:251.79999999999995px;height:143.20000000000005px;background:#2e221f"></div><div style="left:1005.9px;top:570.3px;width:250.10000000000002px;height:22.40000000000009px;background:linear-gradient(#332723,#3c302b);border-bottom:1px solid #4a3d38"></div><div class="t" style="left:1017.1px;top:573.8px;color:#d6ccc6">Watch</div><div style="left:1007.7px;top:593.1px;width:249.29999999999995px;height:20.5px;background:#3a2e2a"></div><div style="left:1129.6px;top:593.1px;width:3.7999999999999545px;height:20.5px;background:#2f2421"></div><div class="t" style="left:1010.4px;top:596.7px;color:#d6ccc6">Name</div><div class="t" style="left:1137.6px;top:596.7px;color:#d6ccc6">Value</div><div style="left:1007.7px;top:633.6px;width:249.29999999999995px;height:1.0px;background:#3a2d2a"></div><div style="left:1007.7px;top:653.6px;width:249.29999999999995px;height:1.0px;background:#3a2d2a"></div><div style="left:1007.7px;top:673.6px;width:249.29999999999995px;height:1.0px;background:#3a2d2a"></div><div style="left:1007.7px;top:693.6px;width:249.29999999999995px;height:1.0px;background:#3a2d2a"></div><div style="left:1131.1px;top:613.6px;width:1.0px;height:99.89999999999998px;background:#3a2d2a"></div>
<div style="left:742px;top:570.3px;width:6px;height:143.20000000000005px;background:#221815"></div>
<div style="left:743.5px;top:570.3px;width:3.0px;height:143.20000000000005px;background:#2a201d"></div>
<div style="left:998px;top:570.3px;width:7.2000000000000455px;height:143.20000000000005px;background:#221815"></div>
<div style="left:999.5px;top:570.3px;width:4.0px;height:143.20000000000005px;background:#2a201d"></div>
<div style="left:500px;top:623px;width:1px;height:89px;background:#3d312d"></div>
<div style="left:757px;top:623px;width:1px;height:89px;background:#3d312d"></div>
<div style="left:1013.5px;top:623px;width:1.0px;height:10px;background:#3d312d"></div>
<div style="left:1013.5px;top:623px;width:6.5px;height:1px;background:#3d312d"></div>
<div style="left:501px;top:623.6px;width:6px;height:1.0px;background:#3d312d"></div>
<div class="t" style="left:510.3px;top:616.6px;color:#d6ccc6">.ScriptName</div>
<div class="t" style="left:619.5px;top:616.6px;width:122px;overflow:hidden;color:#d6ccc6">&quot;gml_Object_obj_Coin_</div>
<div style="left:501px;top:643.6px;width:6px;height:1.0px;background:#3d312d"></div>
<div class="t" style="left:510.3px;top:636.6px;color:#d6ccc6">.PC</div>
<div class="t" style="left:619.5px;top:636.6px;width:122px;overflow:hidden;color:#d6ccc6">00000000</div>
<div style="left:501px;top:663.6px;width:6px;height:1.0px;background:#3d312d"></div>
<div class="t" style="left:510.3px;top:656.6px;color:#d6ccc6">.Self</div>
<div class="t" style="left:619.5px;top:656.6px;width:122px;overflow:hidden;color:#d6ccc6">115572 (Instance of ol</div>
<div style="left:501px;top:683.6px;width:6px;height:1.0px;background:#3d312d"></div>
<div class="t" style="left:510.3px;top:676.6px;color:#d6ccc6">.Other</div>
<div class="t" style="left:619.5px;top:676.6px;width:122px;overflow:hidden;color:#d6ccc6">115572 (Instance of ol</div>
<div style="left:496.8px;top:658.6px;width:10.5px;height:11.0px;background:#2e221f;border:1px solid #3e322e;border-radius:2px"></div>
<svg style="left:497px;top:659.1px" width="10" height="10"><path d="M5,1.5 L5,8.5 M1.5,5 L8.5,5" stroke="#e2dad6" stroke-width="2"/></svg>
<div style="left:496.8px;top:678.6px;width:10.5px;height:11.0px;background:#2e221f;border:1px solid #3e322e;border-radius:2px"></div>
<svg style="left:497px;top:679.1px" width="10" height="10"><path d="M5,1.5 L5,8.5 M1.5,5 L8.5,5" stroke="#e2dad6" stroke-width="2"/></svg>
<div style="left:758px;top:623.6px;width:5px;height:1.0px;background:#3d312d"></div>
<div class="t" style="left:765.9px;top:616.6px;color:#d6ccc6">pause</div>
<div class="t" style="left:875.5px;top:616.6px;color:#d6ccc6">0</div>
<div style="left:758px;top:643.6px;width:5px;height:1.0px;background:#3d312d"></div>
<div class="t" style="left:765.9px;top:636.6px;color:#d6ccc6">game_font</div>
<div class="t" style="left:875.5px;top:636.6px;color:#d6ccc6">0</div>
<div style="left:758px;top:663.6px;width:5px;height:1.0px;background:#3d312d"></div>
<div class="t" style="left:765.9px;top:656.6px;color:#d6ccc6">multi</div>
<div class="t" style="left:875.5px;top:656.6px;color:#d6ccc6">1</div>
<div style="left:758px;top:683.6px;width:5px;height:1.0px;background:#3d312d"></div>
<div class="t" style="left:765.9px;top:676.6px;color:#d6ccc6">p_score</div>
<div class="t" style="left:875.5px;top:676.6px;color:#d6ccc6">0</div>
<div style="left:758px;top:703.6px;width:5px;height:1.0px;background:#3d312d"></div>
<div class="t" style="left:765.9px;top:696.6px;color:#d6ccc6">world</div>
<div class="t" style="left:875.5px;top:696.6px;color:#d6ccc6">3</div>
<div style="left:983.8px;top:614.5px;width:11.900000000000091px;height:98.0px;background:#2a1f1c;border-radius:2px"></div>
<svg style="left:984px;top:615px" width="12" height="8"><path d="M2,6.5 L6,2 L10,6.5 Z" fill="#5a504c"/></svg>
<div style="left:985.5px;top:625px;width:8.5px;height:4px;background:#4e4542"></div>
<div style="left:985.5px;top:631.2px;width:8.5px;height:8.799999999999955px;background:#5a504c"></div>
<div style="left:985.5px;top:642px;width:8.5px;height:4px;background:#4e4542"></div>
<div style="left:988px;top:646px;width:3.5px;height:54px;background:#3a302c"></div>
<svg style="left:984px;top:702px" width="12" height="8"><path d="M2,1.5 L6,6 L10,1.5 Z" fill="#5a504c"/></svg>
<div class="t" style="left:1022.3px;top:616.6px;color:#d6ccc6">Add new watch...</div>
<svg width="1537" height="736" viewBox="0 0 1537 736">
<rect x="16" y="43" width="254" height="681" fill="#000"/>
<rect x="32" y="47" width="236" height="41.5" fill="#fff"/>
<rect x="32" y="122" width="236" height="243" fill="#fff"/>
<rect x="32" y="399" width="236" height="247.5" fill="#fff"/>
<rect x="32" y="680" width="236" height="32" fill="#fff"/>
<rect x="20" y="88" width="248" height="26" fill="#d75a26"/>
<rect x="268" y="110.5" width="6" height="3.5" fill="#d75a26"/>
<path d="M20,87 L182,87 C197,87 199,108.6 216,108.6 L270,108.6" stroke="#000" stroke-width="4" fill="none"/>
<text x="28.6" y="108.7" fill="#fff" stroke="#fff" stroke-width="0.3" font-family="Liberation Sans" font-size="18.8" textLength="100.8" lengthAdjust="spacingAndGlyphs">Graph View</text>
<rect x="20" y="364.5" width="248" height="26" fill="#d75a26"/>
<rect x="268" y="387.0" width="6" height="3.5" fill="#d75a26"/>
<path d="M20,363.5 L182,363.5 C197,363.5 199,385.1 216,385.1 L270,385.1" stroke="#000" stroke-width="4" fill="none"/>
<text x="28.6" y="385.2" fill="#fff" stroke="#fff" stroke-width="0.3" font-family="Liberation Sans" font-size="18.8" textLength="126.8" lengthAdjust="spacingAndGlyphs">Resource View</text>
<rect x="20" y="646" width="248" height="26" fill="#d75a26"/>
<rect x="268" y="668.5" width="6" height="3.5" fill="#d75a26"/>
<path d="M20,645 L182,645 C197,645 199,666.6 216,666.6 L270,666.6" stroke="#000" stroke-width="4" fill="none"/>
<text x="28.6" y="666.7" fill="#fff" stroke="#fff" stroke-width="0.3" font-family="Liberation Sans" font-size="18.8" textLength="84.8" lengthAdjust="spacingAndGlyphs">Call Stack</text>
<rect x="1265" y="43" width="261" height="682" fill="#000"/>
<rect x="1279" y="47" width="72" height="2" fill="#fff"/>
<rect x="1279" y="83" width="209" height="202.5" fill="#fff"/>
<rect x="1279" y="319" width="193" height="297" fill="#fff"/>
<rect x="1279" y="650" width="193" height="62" fill="#fff"/>
<rect x="1279" y="49" width="238" height="26" fill="#d75a26"/>
<rect x="1263" y="71.5" width="16" height="3.5" fill="#d75a26"/>
<path d="M1263,69.8 L1325,69.8 C1341,69.8 1343,48 1361,48 L1517,48" stroke="#000" stroke-width="4" fill="none"/>
<text x="1435.2" y="70.2" fill="#fff" stroke="#fff" stroke-width="0.3" font-family="Liberation Sans" font-size="18.8" textLength="71.3" lengthAdjust="spacingAndGlyphs">Tool Bar</text>
<rect x="1279" y="285.5" width="238" height="25.5" fill="#d75a26"/>
<rect x="1263" y="307.5" width="16" height="3.5" fill="#d75a26"/>
<path d="M1263,305.8 L1325,305.8 C1341,305.8 1343,284 1361,284 L1517,284" stroke="#000" stroke-width="4" fill="none"/>
<text x="1413.2" y="305.2" fill="#fff" stroke="#fff" stroke-width="0.3" font-family="Liberation Sans" font-size="18.8" textLength="93.3" lengthAdjust="spacingAndGlyphs">Code View</text>
<rect x="1279" y="616" width="238" height="26" fill="#d75a26"/>
<rect x="1263" y="638.5" width="16" height="3.5" fill="#d75a26"/>
<path d="M1263,636.8 L1325,636.8 C1341,636.8 1343,615 1361,615 L1517,615" stroke="#000" stroke-width="4" fill="none"/>
<text x="1433.5" y="636.5" fill="#fff" stroke="#fff" stroke-width="0.3" font-family="Liberation Sans" font-size="18.8" textLength="73" lengthAdjust="spacingAndGlyphs">Watches</text>
</svg>
</div></body></html>
